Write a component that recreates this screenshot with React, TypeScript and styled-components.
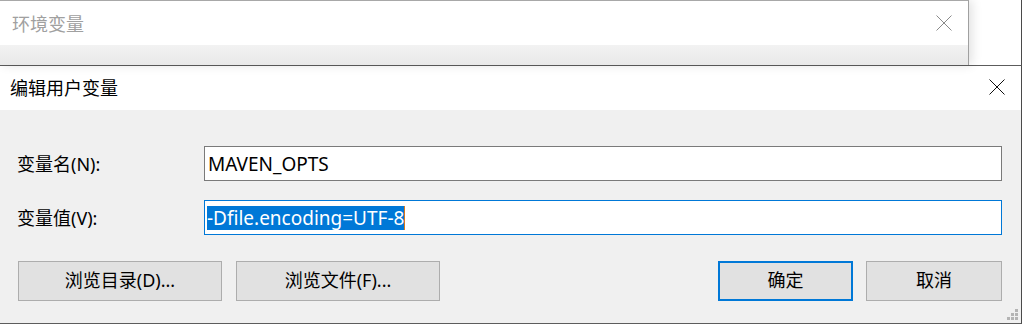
import React from "react";
import styled, { createGlobalStyle } from "styled-components";

const GlobalStyle = createGlobalStyle`
  html, body { margin: 0; padding: 0; background: #ffffff; }
  body {
    width: 1023px;
    height: 324px;
    overflow: hidden;
    font-family: "Noto Sans", "Noto Sans CJK SC", sans-serif;
    color: #000;
  }
  * { box-sizing: border-box; }
`;

const Screen = styled.div`
  width: 1023px;
  height: 324px;
  display: flex;
  flex-direction: column;
  position: relative;
`;

const BackRow = styled.div`
  height: 65px;
  display: flex;
`;

const BackWindow = styled.div`
  width: 969px;
  display: flex;
  flex-direction: column;
  border-top: 1px solid #a8a8a8;
  border-right: 1px solid #a0a0a0;
  box-shadow: 3px 0 10px rgba(0, 0, 0, 0.12);
  position: relative;
  z-index: 1;
`;

const BackTitle = styled.div`
  height: 44px;
  background: #ffffff;
  display: flex;
  align-items: center;
  justify-content: space-between;
  padding: 0 16px 0 12px;
  font-family: "Noto Sans CJK SC", sans-serif;
  font-size: 18px;
  line-height: 20px;
  color: #a0a0a0;
`;

const BackBand = styled.div`
  flex: 1;
  background: linear-gradient(#f2f2f2, #e8e8e8);
`;

const BackSide = styled.div`
  width: 53px;
  background: #ffffff;
  border-right: 1px solid #4a4a4a;
`;

const Dialog = styled.div`
  width: 1022px;
  height: 259px;
  border-top: 1px solid #5c5c5c;
  border-right: 1px solid #4a4a4a;
  border-bottom: 1px solid #5c5c5c;
  display: flex;
  flex-direction: column;
  position: relative;
`;

const DialogTitle = styled.div`
  height: 44px;
  background: #ffffff;
  display: flex;
  align-items: center;
  justify-content: space-between;
  padding: 0 16px 2px 10px;
  font-family: "Noto Sans CJK SC", sans-serif;
  font-size: 18px;
  line-height: 20px;
`;

const DialogBody = styled.div`
  flex: 1;
  background: #f0f0f0;
  padding: 36px 19px 0 17px;
  display: flex;
  flex-direction: column;
`;

const Form = styled.div`
  display: grid;
  grid-template-columns: 187px 1fr;
  grid-auto-rows: 35px;
  row-gap: 19px;
  align-items: center;
`;

const Label = styled.label`
  font-family: "Noto Sans", "Noto Sans CJK SC", sans-serif;
  font-size: 18px;
  line-height: 22px;
  padding-top: 1px;
`;

const Field = styled.div<{ $focused?: boolean }>`
  height: 35px;
  background: #ffffff;
  border: 1px solid ${(p) => (p.$focused ? "#0078d7" : "#7a7a7a")};
  display: flex;
  align-items: center;
  padding-left: ${(p) => (p.$focused ? "2px" : "3px")};
  font-family: "Noto Sans", sans-serif;
  font-size: 19px;
  line-height: 24px;
  white-space: nowrap;
`;

const Selected = styled.span`
  background: #0078d7;
  color: #ffffff;
  height: 24px;
  line-height: 24px;
  display: inline-block;
`;

const Caret = styled.span`
  display: inline-block;
  width: 1px;
  height: 24px;
  background: #d8771c;
`;

const ButtonRow = styled.div`
  margin-top: 26px;
  display: flex;
  align-items: center;
  padding-left: 1px;
`;

const Button = styled.button<{ $w: number; $default?: boolean }>`
  width: ${(p) => p.$w}px;
  height: 40px;
  margin: 0;
  padding: 0 0 2px;
  background: #e1e1e1;
  border: ${(p) => (p.$default ? "2px solid #0078d7" : "1px solid #adadad")};
  font-family: "Noto Sans", "Noto Sans CJK SC", sans-serif;
  font-size: 18px;
  line-height: 22px;
  color: #000;
  display: flex;
  align-items: center;
  justify-content: center;
`;

const Gap = styled.div<{ $w?: number }>`
  ${(p) => (p.$w ? `width: ${p.$w}px;` : "flex: 1;")}
`;

const Grip = styled.svg`
  position: absolute;
  right: 3px;
  bottom: 2px;
`;

const CloseIcon = ({ color }: { color: string }) => (
  <svg width="16" height="16" viewBox="0 0 16 16">
    <path d="M0.5 0.5 L15.5 15.5 M15.5 0.5 L0.5 15.5" stroke={color} strokeWidth="1" fill="none" />
  </svg>
);

export default function App() {
  return (
    <>
      <GlobalStyle />
      <Screen>
        <BackRow>
          <BackWindow>
            <BackTitle>
              <span>环境变量</span>
              <CloseIcon color="#8a8a8a" />
            </BackTitle>
            <BackBand />
          </BackWindow>
          <BackSide />
        </BackRow>
        <Dialog>
          <DialogTitle>
            <span>编辑用户变量</span>
            <CloseIcon color="#111111" />
          </DialogTitle>
          <DialogBody>
            <Form>
              <Label>变量名(N):</Label>
              <Field>MAVEN_OPTS</Field>
              <Label>变量值(V):</Label>
              <Field $focused>
                <Selected>-Dfile.encoding=UTF-8</Selected>
                <Caret />
              </Field>
            </Form>
            <ButtonRow>
              <Button $w={204}>浏览目录(D)...</Button>
              <Gap $w={14} />
              <Button $w={204}>浏览文件(F)...</Button>
              <Gap />
              <Button $w={135} $default>确定</Button>
              <Gap $w={13} />
              <Button $w={136}>取消</Button>
            </ButtonRow>
          </DialogBody>
          <Grip width="12" height="12" viewBox="0 0 12 12">
            <g fill="#b4b4b4">
              <rect x="9" y="0" width="3" height="3" />
              <rect x="5" y="4" width="3" height="3" />
              <rect x="9" y="4" width="3" height="3" />
              <rect x="1" y="8" width="3" height="3" />
              <rect x="5" y="8" width="3" height="3" />
              <rect x="9" y="8" width="3" height="3" />
            </g>
          </Grip>
        </Dialog>
      </Screen>
    </>
  );
}
